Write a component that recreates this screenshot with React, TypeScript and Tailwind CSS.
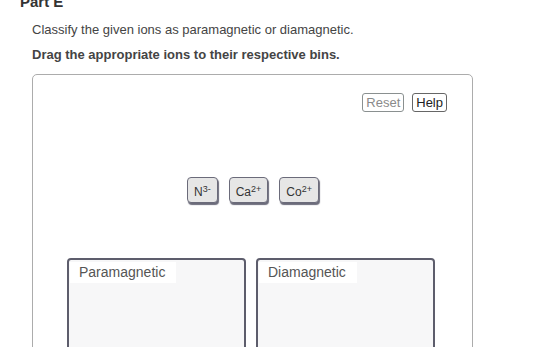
import React from "react";

function Chip({ base, sup }: { base: string; sup: string }) {
  return (
    <div className="h-[26px] px-[6px] flex items-center justify-center rounded-[4px] bg-[#e6e6e6] border border-[#6b6b7a] shadow-[1px_2px_1px_#6b6b7a] text-[12px] text-[#333]">
      <span className="leading-[14px] mt-[3px]">
        {base}
        <span className="text-[9px] align-top relative top-[-3px]">{sup}</span>
      </span>
    </div>
  );
}

function Bin({ label }: { label: string }) {
  return (
    <div className="w-[179px] h-[120px] rounded-[4px] border-2 border-[#5d5d6c] bg-[#f7f7f8]">
      <div className="mt-[1px] ml-[1px] inline-block bg-white pl-[9px] pr-[11px] h-[21px] leading-[21px] text-[14px] text-[#555]">
        {label}
      </div>
    </div>
  );
}

export default function App() {
  return (
    <div className="w-[551px] h-[347px] overflow-hidden bg-white relative" style={{ fontFamily: '"Liberation Sans", Arial, sans-serif' }}>
      <div className="absolute left-[20px] top-[-6px] text-[15px] font-bold text-[#333] leading-[16px]">Part E</div>
      <div className="pt-[22px] pl-[32px]">
        <div className="text-[13px] text-[#444] leading-[16px]">Classify the given ions as paramagnetic or diamagnetic.</div>
        <div className="mt-[9px] text-[13px] font-bold text-[#444] leading-[16px]">Drag the appropriate ions to their respective bins.</div>
        <div className="mt-[11px] w-[441px] h-[300px] border border-[#acacac] rounded-[5px]">
          <div className="flex justify-end gap-[8px] pt-[18px] pr-[25px]">
            <button className="h-[19px] px-[3px] border border-[#8a9090] rounded-[3px] text-[13px] text-[#8a8a8a] leading-[17px] bg-white">Reset</button>
            <button className="h-[19px] px-[3px] border border-[#666] rounded-[3px] text-[13px] text-[#222] leading-[17px] bg-white">Help</button>
          </div>
          <div className="flex gap-[11px] pl-[154px] mt-[65px]">
            <Chip base="N" sup="3-" />
            <Chip base="Ca" sup="2+" />
            <Chip base="Co" sup="2+" />
          </div>
          <div className="flex gap-[10px] pl-[34px] mt-[55px]">
            <Bin label="Paramagnetic" />
            <Bin label="Diamagnetic" />
          </div>
        </div>
      </div>
    </div>
  );
}
